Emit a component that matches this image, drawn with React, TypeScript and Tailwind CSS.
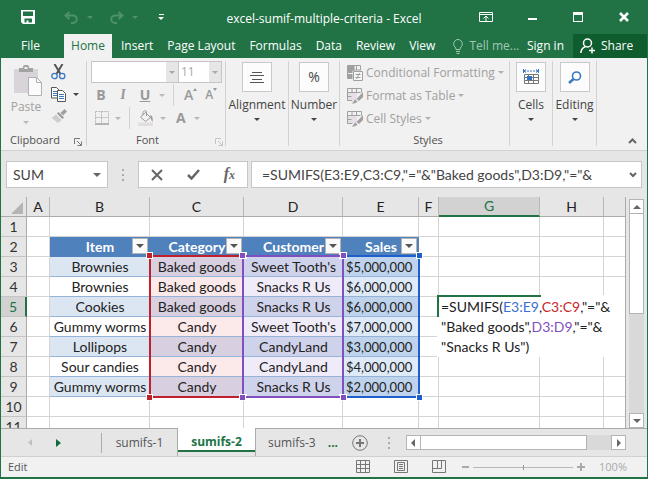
import { useState, type ReactNode } from 'react'
import clsx from 'clsx'

const UI = "font-['Open_Sans','Noto_Sans',sans-serif]"
const SHEET = "font-['Lato','Liberation_Sans',sans-serif]"

const MENU = ['Insert', 'Page Layout', 'Formulas', 'Data', 'Review', 'View']

const COLUMNS = [
  { name: 'A', width: 'w-[23px]' },
  { name: 'B', width: 'w-[100px]' },
  { name: 'C', width: 'w-[94px]' },
  { name: 'D', width: 'w-[99px]' },
  { name: 'E', width: 'w-[76px]' },
  { name: 'F', width: 'w-5' },
  { name: 'G', width: 'w-[101px]' },
  { name: 'H', width: 'w-16' },
]

const ORDERS = [
  ['Brownies', 'Baked goods', "Sweet Tooth's", '$5,000,000'],
  ['Brownies', 'Baked goods', 'Snacks R Us', '$6,000,000'],
  ['Cookies', 'Baked goods', 'Snacks R Us', '$6,000,000'],
  ['Gummy worms', 'Candy', "Sweet Tooth's", '$7,000,000'],
  ['Lollipops', 'Candy', 'CandyLand', '$3,000,000'],
  ['Sour candies', 'Candy', 'CandyLand', '$4,000,000'],
  ['Gummy worms', 'Candy', 'Snacks R Us', '$2,000,000'],
]

const BANDED = ['bg-[#dce6f3]', 'bg-[#d8d0e1]', 'bg-[#cfd2eb]', 'bg-[#bfd3ed]']
const PLAIN = ['bg-white', 'bg-[#fce9e9]', 'bg-[#f0ebf8]', 'bg-[#dfeaf8]']

function Caret({ className = 'h-[3px] w-1.5' }: { className?: string }) {
  return (
    <svg viewBox="0 0 6 3" className={clsx('shrink-0 fill-current', className)}>
      <path d="M0 0h6L3 3z" />
    </svg>
  )
}

function Launcher({ className }: { className?: string }) {
  return (
    <svg viewBox="0 0 8 8" className={clsx('h-2 w-2 fill-none stroke-current', className)}>
      <path d="M.5 6V.5H6M3 3l4 4M7.5 3.5v4h-4" />
    </svg>
  )
}

function TitleBar() {
  return (
    <header className="grid h-[34px] shrink-0 grid-cols-[1fr_auto_1fr] items-center text-white">
      <div className="flex items-center pl-5">
        <button aria-label="Save">
          <svg viewBox="0 0 14 14" className="h-3.5 w-3.5">
            <path d="M0 0h14v14H2L0 12z" fill="#fff" />
            <path d="M2 1.500h10v4.500H2zM3.500 8.500h7.500v4H7.500v-2h-2v2h-2z" fill="#217346" />
          </svg>
        </button>
        <button aria-label="Undo" className="ml-[29px] flex items-center gap-2 text-[#4f9169]">
          <svg viewBox="0 0 15 13" className="h-[13px] w-[15px] fill-none stroke-current stroke-2">
            <path d="M5.500 1L1.500 4.500l4 3.500M2 4.500h7a3.700 3.700 0 0 1 0 7.500H7" />
          </svg>
          <Caret />
        </button>
        <button aria-label="Redo" className="ml-4 flex items-center gap-2 text-[#4f9169]">
          <svg viewBox="0 0 15 13" className="h-[13px] w-[15px] fill-none stroke-current stroke-2">
            <path d="M9.500 1l4 3.500-4 3.500M13 4.500H6A3.700 3.700 0 0 0 6 12h2" />
          </svg>
          <Caret />
        </button>
        <button aria-label="Customize Quick Access Toolbar" className="ml-5 flex flex-col items-center gap-0.5">
          <span className="h-px w-[5px] bg-white" />
          <Caret />
        </button>
      </div>
      <h1 className="pt-1 text-[12px] leading-4">excel-sumif-multiple-criteria - Excel</h1>
      <div className="flex items-center justify-end pr-[18px]">
        <button aria-label="Ribbon display options">
          <svg viewBox="0 0 14 10" className="h-2.5 w-3.5 fill-none stroke-white">
            <path d="M.5.5h13v9H.5zM.5 2.500h13M7 9V5M4.500 6.500L7 4l2.500 2.500" />
          </svg>
        </button>
        <button aria-label="Minimize" className="mt-[3px] ml-[35px] h-[2px] w-[9px] bg-white" />
        <button aria-label="Maximize" className="ml-9 h-2.5 w-2.5 border border-t-[3px] border-white" />
        <button aria-label="Close" className="ml-9">
          <svg viewBox="0 0 10 10" className="h-2.5 w-2.5 stroke-white stroke-[2.5]">
            <path d="M1 1l8 8M9 1L1 9" />
          </svg>
        </button>
      </div>
    </header>
  )
}

function RibbonTabs() {
  return (
    <nav className="flex h-6 shrink-0 items-stretch text-[12px] leading-4 text-white">
      <button className="w-[63px] pr-1">File</button>
      <button className="w-12 bg-[#f1f1f1] text-[#217346]">Home</button>
      <div className="flex gap-3.5 pl-[9px]">
        {MENU.map((name) => (
          <button key={name} className="whitespace-nowrap">
            {name}
          </button>
        ))}
      </div>
      <button className="ml-[18px] flex items-center gap-1.5 whitespace-nowrap text-[#a3c7b2]">
        <svg viewBox="0 0 10 15" className="h-[15px] w-2.5 fill-none stroke-current">
          <path d="M3 10.500C3 8.500 .7 7.500 .7 4.800a4.300 4.300 0 0 1 8.600 0C9.300 7.500 7 8.500 7 10.500zM3 12.500h4M3.500 14.500h3" />
        </svg>
        Tell me...
      </button>
      <button className="ml-auto whitespace-nowrap">Sign in</button>
      <button className="ml-[9px] flex w-[74px] items-center gap-1.5 bg-[#0f5c2e] pl-[7px]">
        <svg viewBox="0 0 15 16" className="h-4 w-[15px] fill-none stroke-white stroke-[1.5]">
          <circle cx="7.500" cy="5" r="4" />
          <path d="M.8 15c.3-3.500 2-5.500 4.500-6.300M9 12.500h6M12 9.500v6" />
        </svg>
        Share
      </button>
    </nav>
  )
}

function BigButton({ label, children }: { label: string; children: ReactNode }) {
  return (
    <button className="flex w-full flex-col items-center text-[12px] leading-4 text-[#444]">
      <span className="flex h-[30px] w-[30px] items-center justify-center border border-[#c9c9c9] bg-[#fcfcfc]">
        {children}
      </span>
      <span className="mt-[5px]">{label}</span>
      <Caret className="mt-[5px] h-[3px] w-1.5" />
    </button>
  )
}

function Group({ className, children }: { className: string; children: ReactNode }) {
  return <section className={clsx('shrink-0 border-r border-[#d2d2d2]', className)}>{children}</section>
}

function GroupLabel({ children }: { children: ReactNode }) {
  return <h2 className="mt-auto text-center text-[11px] leading-3 text-[#505050]">{children}</h2>
}

function StyleButton({ label, conditional }: { label: string; conditional?: boolean }) {
  return (
    <button className="flex h-[23px] items-center gap-[3px] whitespace-nowrap">
      <svg viewBox="0 0 16 16" className="h-4 w-4 fill-none stroke-[#a0a0a0]">
        {conditional ? (
          <>
            <path d="M.5.500h13v5M.5.500v13h5" />
            <path d="M1 1h6v4H1zM1 9h4v4H1zM1 5h4v4H1z" fill="#a0a0a0" />
            <path d="M1 5h12M9.500 1v4" />
            <path d="M1 8.500h5" stroke="#eee" />
            <path d="M6.500 6.500h9v9h-9z" fill="#f6f6f6" />
            <path d="M8.500 9.500h5M8.500 12.500h5M12.500 8l-3 6" />
          </>
        ) : (
          <>
            <path d="M1 5h9v7H1z" fill="#e6dfe6" stroke="none" />
            <path d="M.5.500h14v4M.5.500v12h5M.5 4.500h13M.5 8.500h4M5 .5v4M9.500.500v4" />
            <path d="M16 4v5l-4 4-2.500-2zM8 11.500l2.500 2C9.500 15 8 15.500 4.500 15.500 7 14.500 6.500 12.500 8 11.500z" fill="#a0a0a0" stroke="none" />
          </>
        )}
      </svg>
      {label}
      <Caret className="h-[3px] w-1.5 text-[#b0b0b0]" />
    </button>
  )
}

function ClipboardGroup() {
  return (
    <Group className="flex w-[86px] flex-col">
      <div className="flex">
        <button className="flex w-[50px] flex-col items-center pt-1 text-[12px] leading-4 text-[#a0a0a0]">
          <svg viewBox="0 0 28 31" className="ml-1 h-[31px] w-7">
            <path d="M0 4h24v24H0z" fill="#d9d4d9" />
            <path d="M5 3h4V1.500C9 .5 10 0 12 0s3 .5 3 1.500V3h4v4H5z" fill="#a3a3a3" />
            <path d="M10.500 2h3v2h-3z" fill="#eee" />
            <path d="M14.500 12.500h8l5 5v13h-13z" fill="#fbfbfd" stroke="#b0b0b0" />
            <path d="M22.500 12.500v5h5" fill="none" stroke="#b0b0b0" />
          </svg>
          <span className="mt-[3px]">Paste</span>
          <Caret className="mt-1.5 h-[3px] w-1.5 text-[#b8b8b8]" />
        </button>
        <div className="flex flex-col items-start gap-[7px] pt-[3px] text-[#444]">
          <button aria-label="Cut">
            <svg viewBox="0 0 15 16" className="h-4 w-[15px] fill-none">
              <path d="M3.500 0l6 10M11.500 0l-6 10" stroke="#555" strokeWidth="2" />
              <circle cx="3.500" cy="12" r="2.700" stroke="#3a79c0" strokeWidth="1.300" />
              <circle cx="11.200" cy="12" r="2.700" stroke="#3a79c0" strokeWidth="1.300" />
            </svg>
          </button>
          <button aria-label="Copy" className="flex items-center gap-[7px]">
            <svg viewBox="0 0 15 15" className="h-[15px] w-[15px]">
              <path d="M.5.500h5l2.500 2.500v8H.5z" fill="#fff" stroke="#555" />
              <path d="M2 4.500h4M2 6.500h4M2 8.500h4" stroke="#3a79c0" />
              <path d="M6.500 3.500h5l3 3v8h-8z" fill="#fff" stroke="#555" />
              <path d="M8 7.500h5M8 9.500h5M8 11.500h5" stroke="#3a79c0" />
            </svg>
            <Caret />
          </button>
          <button aria-label="Format Painter">
            <svg viewBox="0 0 16 14" className="h-3.5 w-4">
              <path d="M13.500 0L16 2.500l-4 4-2.500-2.500z" fill="#a0a0a0" />
              <path d="M7.500 3l5.500 5.500-1.500 1.500L6 4.500z" fill="#989898" />
              <path d="M5 5.500l5.500 5.500L7 14 .5 9z" fill="#cfcbcf" />
            </svg>
          </button>
        </div>
      </div>
      <div className="mt-auto flex items-end pl-[9px]">
        <GroupLabel>Clipboard</GroupLabel>
        <Launcher className="mr-1 ml-auto text-[#777]" />
      </div>
    </Group>
  )
}

function RibbonSelect({ label, options, className }: { label: string; options: string[]; className: string }) {
  return (
    <div className={clsx('flex h-[22px] items-stretch border border-[#c6c6c6] bg-white text-[#a8a8a8]', className)}>
      <select aria-label={label} className="min-w-0 flex-1 appearance-none bg-transparent px-0.5 text-[12px] leading-4">
        {options.map((option) => (
          <option key={option}>{option}</option>
        ))}
      </select>
      <span className="flex w-3 items-center justify-center bg-[#e6e6e6]">
        <Caret />
      </span>
    </div>
  )
}

function FontGroup() {
  return (
    <Group className="flex w-[139px] flex-col pl-1">
      <div className="flex">
        <RibbonSelect label="Font" options={['']} className="w-[88px]" />
        <RibbonSelect label="Font size" options={['11']} className="-ml-px w-11" />
      </div>
      <div className="flex h-6 items-center text-[14px] leading-4 text-[#999]">
        <button className="w-5 font-bold">B</button>
        <button className="w-6 font-serif font-bold italic">I</button>
        <button className="w-5 font-bold underline">U</button>
        <Caret className="ml-1 h-[3px] w-1.5 text-[#b8b8b8]" />
        <span className="ml-2 h-[22px] w-px bg-[#d2d2d2]" />
        <button aria-label="Increase font size" className="ml-2.5 flex font-semibold">
          <span>A</span>
          <svg viewBox="0 0 4 3" className="mt-px h-[3px] w-1 fill-current"><path d="M0 3h4L2 0z" /></svg>
        </button>
        <button aria-label="Decrease font size" className="ml-2 flex text-[12px] font-semibold">
          <span>A</span>
          <svg viewBox="0 0 4 3" className="mt-px h-[3px] w-1 fill-current"><path d="M0 0h4L2 3z" /></svg>
        </button>
      </div>
      <div className="flex h-[22px] items-center text-[#999]">
        <button aria-label="Borders" className="ml-1 flex items-center gap-1.5">
          <svg viewBox="0 0 14 14" className="h-3.5 w-3.5 fill-none stroke-[#b4b4b4]">
            <path d="M.5.500h13v13M.5.500v13M6.500.500v13M.5 6.500h13" strokeDasharray="2 1" />
            <path d="M0 13h14" strokeWidth="2" />
          </svg>
          <Caret className="h-[3px] w-1.5 text-[#b8b8b8]" />
        </button>
        <span className="ml-2 h-[22px] w-px bg-[#d2d2d2]" />
        <button aria-label="Fill color" className="ml-2 flex items-center gap-1.5">
          <svg viewBox="0 0 16 16" className="h-4 w-4 fill-none stroke-[#999]">
            <path d="M7.500 2.500l5 5-5 4-5-4.500zM5 5V2.500a2 2 0 0 1 3.500-1V6" />
            <path d="M12 5c3 1 3 4 2.500 7-1-2-2-3-2.500-7z" fill="#999" stroke="none" />
            <path d="M0 12.500h15V16H0z" fill="#e3dce2" stroke="none" />
          </svg>
          <Caret className="h-[3px] w-1.5 text-[#b8b8b8]" />
        </button>
        <button aria-label="Font color" className="ml-2.5 flex items-center gap-2 text-[14px] leading-4 font-bold">
          A
          <Caret className="h-[3px] w-1.5 text-[#b8b8b8]" />
        </button>
      </div>
      <div className="mt-auto flex items-end pl-[45px]">
        <GroupLabel>Font</GroupLabel>
        <Launcher className="mr-0.5 ml-auto text-[#c4c4c4]" />
      </div>
    </Group>
  )
}

function Ribbon() {
  return (
    <div className="flex h-[93px] shrink-0 border-b border-[#d2d2d2] bg-[#f1f1f1] pt-[3px] pb-1">
      <ClipboardGroup />
      <FontGroup />
      <Group className="w-[63px] pt-px">
        <BigButton label="Alignment">
          <svg viewBox="0 0 14 11" className="h-[11px] w-3.5 stroke-[#555]">
            <path d="M2 .5h10M0 3.500h14M2 7.500h10M0 10.500h14" />
          </svg>
        </BigButton>
      </Group>
      <Group className="w-[51px] pt-px">
        <BigButton label="Number">
          <span className="text-[14px] leading-4">%</span>
        </BigButton>
      </Group>
      <Group className="flex w-[170px] flex-col pl-[7px] text-[12px] leading-4 text-[#a0a0a0]">
        <StyleButton label="Conditional Formatting" conditional />
        <StyleButton label="Format as Table" />
        <StyleButton label="Cell Styles" />
        <GroupLabel>Styles</GroupLabel>
      </Group>
      <Group className="w-[43px] pt-px">
        <BigButton label="Cells">
          <svg viewBox="0 0 16 16" className="h-4 w-4 fill-none stroke-[#777]">
            <path d="M1 2h14" stroke="#3a79c0" strokeDasharray="2 1" />
            <path d="M.5 0v4M15.500 0v4M3 .5L1 2l2 1.500M13 .5L15 2l-2 1.500" stroke="#3a79c0" />
            <path d="M1.500 5.500h14v9h-14zM1 8.500h15M1 11.500h15M5.500 5v10M10.500 5v10" />
            <path d="M4 7h5v4H4z" fill="#2f72c4" stroke="none" />
          </svg>
        </BigButton>
      </Group>
      <Group className="w-11 pt-px">
        <BigButton label="Editing">
          <svg viewBox="0 0 14 13" className="h-[13px] w-3.5 fill-none stroke-[#3a79c0]">
            <circle cx="8.500" cy="5" r="4" strokeWidth="1.600" />
            <path d="M5.500 8L1 12" strokeWidth="2.400" />
          </svg>
        </BigButton>
      </Group>
      <button aria-label="Collapse the Ribbon" className="mt-auto mr-2.5 mb-0.5 ml-auto">
        <svg viewBox="0 0 9 6" className="h-1.5 w-[9px] fill-none stroke-[#666] stroke-2">
          <path d="M1 5l3.500-3.500L8 5" />
        </svg>
      </button>
    </div>
  )
}

function FormulaBar() {
  const [cell, setCell] = useState('SUM')
  const [formula, setFormula] = useState('=SUMIFS(E3:E9,C3:C9,"="&"Baked goods",D3:D9,"="&')

  return (
    <div className={clsx('flex shrink-0 items-center px-[5px] pt-2.5 pb-[9px] text-[#444]', SHEET)}>
      <div className="flex h-[27px] w-[102px] items-center border border-[#c6c6c6] bg-white px-1.5">
        <input
          aria-label="Name Box"
          value={cell}
          onChange={(e) => setCell(e.target.value)}
          className="min-w-0 flex-1 text-[14px] leading-4 outline-none"
        />
        <button aria-label="Open name list">
          <Caret className="h-1 w-2 text-[#666]" />
        </button>
      </div>
      <svg viewBox="0 0 2 12" className="ml-3.5 h-3 w-0.5 fill-[#aaa]">
        <path d="M0 0h2v2H0zM0 5h2v2H0zM0 10h2v2H0z" />
      </svg>
      <div className="ml-3.5 flex h-[27px] w-[110px] items-center justify-between border border-[#c6c6c6] bg-white px-3">
        <button aria-label="Cancel">
          <svg viewBox="0 0 12 12" className="h-3 w-3 stroke-[#666] stroke-2"><path d="M1 1l10 10M11 1L1 11" /></svg>
        </button>
        <button aria-label="Enter">
          <svg viewBox="0 0 13 11" className="h-[11px] w-[13px] fill-none stroke-[#666] stroke-[2.5]"><path d="M1 6l3.500 3.500L12 1" /></svg>
        </button>
        <button aria-label="Insert Function" className="font-['Liberation_Serif',serif] text-[16px] leading-4 font-bold text-[#666] italic">
          f<span className="text-[12px]">x</span>
        </button>
      </div>
      <div className="ml-[3px] flex h-[27px] min-w-0 flex-1 items-center border border-[#c6c6c6] bg-white pr-1 pl-2.5">
        <input
          aria-label="Formula"
          value={formula}
          onChange={(e) => setFormula(e.target.value)}
          className="min-w-0 flex-1 text-[14px] leading-4 outline-none"
        />
        <button aria-label="Expand Formula Bar">
          <svg viewBox="0 0 8 6" className="h-1.5 w-2 fill-none stroke-[#666] stroke-2"><path d="M1 1l3 3 3-3" /></svg>
        </button>
      </div>
    </div>
  )
}

function FilterHeader({ children }: { children: ReactNode }) {
  return (
    <th className="relative border-b border-[#4f81bd] bg-[#4f81bd] p-0 font-bold text-white">
      {children}
      <button
        aria-label={`Filter ${children}`}
        className="absolute right-0.5 bottom-0.5 flex h-4 w-4 items-center justify-center border border-[#b5b5b5] bg-[#fafafa] text-[#555]"
      >
        <Caret className="h-1 w-2" />
      </button>
    </th>
  )
}

function Blank() {
  return <td className="border-r border-b border-[#d4d4d4] p-0" />
}

function RowHeader({ row }: { row: number }) {
  return (
    <th
      className={clsx(
        'h-5 border-b border-b-[#c4c4c4] p-0 text-center font-normal',
        row === 5 ? 'border-r-2 border-r-[#217346] bg-[#d2d2d2] text-[#217346]' : 'border-r border-r-[#ababab] bg-[#e6e6e6] text-[#333]',
      )}
    >
      {row}
    </th>
  )
}

// Coloured frame that Excel draws round a range used in the edited formula
function RangeFrame({ className, handle }: { className: string; handle: string }) {
  return (
    <div className={clsx('pointer-events-none absolute top-[58px] h-[143px] border-2', className)}>
      <span className={clsx('absolute -top-1 -left-1 h-[5px] w-[5px] outline outline-white', handle)} />
      <span className={clsx('absolute -top-1 -right-1 h-[5px] w-[5px] outline outline-white', handle)} />
      <span className={clsx('absolute -bottom-1 -left-1 h-[5px] w-[5px] outline outline-white', handle)} />
      <span className={clsx('absolute -right-1 -bottom-1 h-[5px] w-[5px] outline outline-white', handle)} />
    </div>
  )
}

function CellEditor() {
  return (
    <div className="absolute top-[98px] left-[436px] w-[188px] bg-white leading-5 whitespace-nowrap text-[#222]">
      <div className="h-0.5 w-[104px] bg-[#217346]" />
      <div className="border-l-2 border-[#217346] pl-0.5">
        =SUMIFS(<span className="text-[#3b6fd0]">E3:E9</span>,<span className="text-[#c9252d]">C3:C9</span>,"="&amp;
      </div>
      <div className="pl-1">
        "Baked goods",<span className="text-[#7f4fbf]">D3:D9</span>,"="&amp;
        <br />
        "Snacks R Us")
      </div>
    </div>
  )
}

function Sheet() {
  return (
    <div className={clsx('relative min-w-0 flex-1 overflow-hidden border-r border-[#ababab] text-[14px] leading-4', SHEET)}>
      <table className="w-full table-fixed border-separate border-spacing-0 bg-white text-[#222]">
        <colgroup>
          <col className="w-[26px]" />
          {COLUMNS.map((col) => (
            <col key={col.name} className={col.width} />
          ))}
          <col />
        </colgroup>
        <thead>
          <tr className="bg-[#e6e6e6]">
            <th aria-label="Select all" className="h-5 border-r border-b border-[#ababab] p-0">
              <svg viewBox="0 0 12 12" className="mt-0.5 mr-[3px] ml-auto h-3 w-3 fill-[#b4b4b4]"><path d="M12 0v12H0z" /></svg>
            </th>
            {COLUMNS.map(({ name }) => (
              <th
                key={name}
                className={clsx(
                  'border-r border-r-[#b8b8b8] p-0 font-normal',
                  name === 'G' ? 'border-b-2 border-b-[#217346] bg-[#d2d2d2] text-[#217346]' : 'border-b border-b-[#ababab]',
                )}
              >
                {name}
              </th>
            ))}
            <th className="border-b border-[#ababab] p-0" />
          </tr>
        </thead>
        <tbody>
          <tr>
            <RowHeader row={1} />
            {COLUMNS.map(({ name }) => <Blank key={name} />)}
            <td className="border-b border-[#d4d4d4] p-0" />
          </tr>
          <tr>
            <RowHeader row={2} />
            <Blank />
            <FilterHeader>Item</FilterHeader>
            <FilterHeader>Category</FilterHeader>
            <FilterHeader>Customer</FilterHeader>
            <FilterHeader>Sales</FilterHeader>
            <Blank />
            <Blank />
            <Blank />
            <td className="border-b border-[#d4d4d4] p-0" />
          </tr>
          {ORDERS.map((order, i) => (
            <tr key={i}>
              <RowHeader row={i + 3} />
              <Blank />
              {order.map((value, j) => (
                <td
                  key={j}
                  className={clsx(
                    'border-b border-[#95b3d7] p-0 whitespace-nowrap',
                    j === 3 ? 'pl-[3px] text-left text-[13px]' : 'text-center',
                    i % 2 === 0 ? BANDED[j] : PLAIN[j],
                  )}
                >
                  {value}
                </td>
              ))}
              <Blank />
              <Blank />
              <Blank />
              <td className="border-b border-[#d4d4d4] p-0" />
            </tr>
          ))}
          {[10, 11].map((row) => (
            <tr key={row}>
              <RowHeader row={row} />
              {COLUMNS.map(({ name }) => <Blank key={name} />)}
              <td className="border-b border-[#d4d4d4] p-0" />
            </tr>
          ))}
        </tbody>
      </table>

      <RangeFrame className="left-[341px] w-[78px] border-[#1f5fcc]" handle="bg-[#1f5fcc]" />
      <RangeFrame className="left-[148px] w-[95px] border-[#c01f2c]" handle="bg-[#c01f2c]" />
      <RangeFrame className="left-[241px] w-[102px] border-[#8250be]" handle="bg-[#8250be]" />
      <CellEditor />
    </div>
  )
}

function ScrollButton({ label, path }: { label: string; path: string }) {
  return (
    <button aria-label={label} className="flex h-[15px] w-[15px] shrink-0 items-center justify-center border border-[#b4b4b4] bg-white">
      <svg viewBox="0 0 8 8" className="h-2 w-2 fill-[#666]"><path d={path} /></svg>
    </button>
  )
}

function VerticalScroll() {
  return (
    <div className="flex w-[21px] shrink-0 flex-col items-center pt-0.5">
      <ScrollButton label="Scroll up" path="M0 6h8L4 2z" />
      <div className="flex w-[15px] flex-1 flex-col bg-[#d9d9d9]">
        <div className="h-1/2 w-full border border-t-0 border-[#b4b4b4] bg-white" />
      </div>
      <ScrollButton label="Scroll down" path="M0 2h8L4 6z" />
    </div>
  )
}

function SheetTabs() {
  return (
    <div className="flex h-7 shrink-0 items-stretch text-[12px] leading-4 text-[#555]">
      <div className="flex w-[177px] items-center border-t border-r border-[#ababab]">
        <button aria-label="Previous sheet" className="ml-[27px]">
          <svg viewBox="0 0 4 7" className="h-[7px] w-1 fill-[#c0c0c0]"><path d="M4 0v7L0 3.500z" /></svg>
        </button>
        <button aria-label="Next sheet" className="ml-6">
          <svg viewBox="0 0 5 8" className="h-2 w-[5px] fill-[#0f6b39]"><path d="M0 0v8l5-4z" /></svg>
        </button>
        <span className="ml-10 h-5 w-px bg-[#ababab]" />
        <button className="flex-1">sumifs-1</button>
      </div>
      <button className="mb-1 w-[77px] border-b-2 border-[#217346] bg-white pt-1.5 font-bold text-[#217346]">sumifs-2</button>
      <div className="flex flex-1 items-center border-t border-l border-[#ababab]">
        <button className="ml-3">sumifs-3</button>
        <button aria-label="More sheets" className="ml-3 font-bold text-[#217346]">...</button>
        <button aria-label="New sheet" className="ml-3.5">
          <svg viewBox="0 0 16 16" className="h-4 w-4 fill-none stroke-[#777]">
            <circle cx="8" cy="8" r="7.300" />
            <path d="M4 8h8M8 4v8" strokeWidth="2" />
          </svg>
        </button>
        <svg viewBox="0 0 2 12" className="ml-5 h-3 w-0.5 fill-[#aaa]">
          <path d="M0 0h2v2H0zM0 5h2v2H0zM0 10h2v2H0z" />
        </svg>
        <div className="mr-[21px] ml-4 flex flex-1 bg-[#d9d9d9]">
          <ScrollButton label="Scroll left" path="M6 0v8L2 4z" />
          <div className="-ml-px flex-1 border border-[#b4b4b4] bg-white" />
          <span className="w-6" />
          <ScrollButton label="Scroll right" path="M2 0v8l4-4z" />
        </div>
      </div>
    </div>
  )
}

function StatusBar() {
  const [zoom, setZoom] = useState(100)

  return (
    <footer className="flex h-[21px] shrink-0 items-center border-t border-[#d0d0d0] bg-[#f1f1f1] pr-5 pl-[7px] text-[11px] leading-4 text-[#555]">
      <span className="mr-auto">Edit</span>
      <button aria-label="Normal">
        <svg viewBox="0 0 14 14" className="h-3.5 w-3.5 fill-none stroke-[#777]">
          <path d="M.5.500h13v12H.5zM.5 4.500h13M.5 8.500h13M4.500.500v12M9.500.500v12" />
        </svg>
      </button>
      <button aria-label="Page Layout" className="ml-6">
        <svg viewBox="0 0 14 14" className="h-3.5 w-3.5 fill-none stroke-[#777]">
          <path d="M.5.500h13v12H.5zM3.500 2.500h7v8h-7zM5 4.500h4M5 6.500h4M5 8.500h4" />
        </svg>
      </button>
      <button aria-label="Page Break Preview" className="ml-6">
        <svg viewBox="0 0 14 14" className="h-3.5 w-3.5 fill-none stroke-[#777]">
          <path d="M.5.500h13v12H.5zM.5 8.500h9v-8M5.500.500v8" />
        </svg>
      </button>
      <button aria-label="Zoom out" className="ml-4 h-[2px] w-[7px] bg-[#aaa]" />
      <input
        type="range"
        aria-label="Zoom"
        min={0}
        max={200}
        value={zoom}
        onChange={(e) => setZoom(Number(e.target.value))}
        className="mx-1 h-2 w-[100px] appearance-none bg-[linear-gradient(#b8b8b8,#b8b8b8)] bg-[length:100%_1px] bg-center bg-no-repeat [&::-webkit-slider-thumb]:h-[5px] [&::-webkit-slider-thumb]:w-px [&::-webkit-slider-thumb]:appearance-none [&::-webkit-slider-thumb]:bg-[#999]"
      />
      <button aria-label="Zoom in">
        <svg viewBox="0 0 8 8" className="h-2 w-2 stroke-[#aaa] stroke-2"><path d="M0 4h8M4 0v8" /></svg>
      </button>
      <span className="ml-3.5 text-[#aaa]">{zoom}%</span>
    </footer>
  )
}

export default function App() {
  return (
    <div className={clsx('flex h-screen flex-col overflow-hidden border-x border-b-2 border-[#217346] bg-[#e6e6e6]', UI)}>
      <div className="flex shrink-0 flex-col bg-[#217346]">
        <TitleBar />
        <RibbonTabs />
      </div>
      <Ribbon />
      <FormulaBar />
      <main className="flex min-h-0 flex-1">
        <Sheet />
        <VerticalScroll />
      </main>
      <SheetTabs />
      <StatusBar />
    </div>
  )
}
